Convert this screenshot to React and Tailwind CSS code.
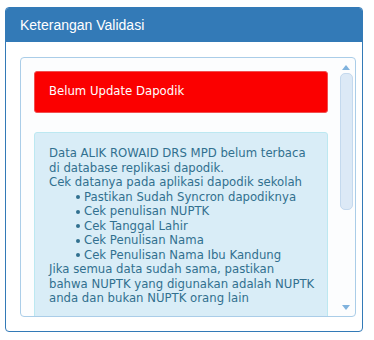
export default function App() {
  const bullets = [
    "Pastikan Sudah Syncron dapodiknya",
    "Cek penulisan NUPTK",
    "Cek Tanggal Lahir",
    "Cek Penulisan Nama",
    "Cek Penulisan Nama Ibu Kandung",
  ];
  return (
    <div className="w-[374px] h-[340px] bg-white pl-[5px] pt-[7px]" style={{ fontFamily: '"DejaVu Sans", sans-serif' }}>
      <div className="w-[358px] h-[325px] border border-[#337ab7] rounded-[4px] overflow-hidden flex flex-col">
        <div className="h-[34px] bg-[#337ab7] px-[14px] flex items-center text-white text-[14px]" style={{ fontFamily: '"Liberation Sans", Arial, sans-serif' }}>
          Keterangan Validasi
        </div>
        <div className="pl-[14px] pt-[15px]">
          <div className="w-[336px] h-[260px] border border-[#aacde8] rounded-[4px] bg-[#fcfdfe] flex overflow-hidden">
            <div className="flex-1 overflow-hidden pl-[13px] pt-[13px]">
              <div className="w-[294px] h-[42px] bg-[#fb0000] border border-[#f05050] rounded-[3px] flex items-center pl-[14px] text-white text-[11.7px]">
                Belum Update Dapodik
              </div>
              <div className="w-[294px] mt-[19px] bg-[#d9edf7] border border-[#bce8f1] rounded-[3px] pl-[14px] pr-[6px] pt-[13px] pb-[15px] text-[#31708f] text-[11.7px] leading-[14.5px] whitespace-nowrap">
                <div>Data ALIK ROWAID DRS MPD belum terbaca<br />di database replikasi dapodik.</div>
                <div>Cek datanya pada aplikasi dapodik sekolah</div>
                <ul className="pl-[27px]">
                  {bullets.map((b) => (
                    <li key={b} className="flex items-center">
                      <span className="w-[4px] h-[4px] rounded-full bg-[#31708f] shrink-0 mr-[4px] mt-[1px]" />
                      <span>{b}</span>
                    </li>
                  ))}
                </ul>
                <div>Jika semua data sudah sama, pastikan<br />bahwa NUPTK yang digunakan adalah NUPTK<br />anda dan bukan NUPTK orang lain</div>
              </div>
            </div>
            <div className="w-[17px] shrink-0 flex flex-col items-center pt-[7px] pb-[6px]">
              <svg width="8" height="5" viewBox="0 0 8 5" className="mr-[1px]">
                <path d="M0 5 L4 0 L8 5 Z" fill="#7fb2dd" />
              </svg>
              <div className="mt-[3px] w-[13px] h-[137px] bg-[#dce9f6] border border-[#c4d9ee] rounded-[5px]" />
              <div className="flex-1" />
              <svg width="8" height="5" viewBox="0 0 8 5" className="mr-[1px]">
                <path d="M0 0 L8 0 L4 5 Z" fill="#7fb2dd" />
              </svg>
            </div>
          </div>
        </div>
      </div>
    </div>
  );
}
